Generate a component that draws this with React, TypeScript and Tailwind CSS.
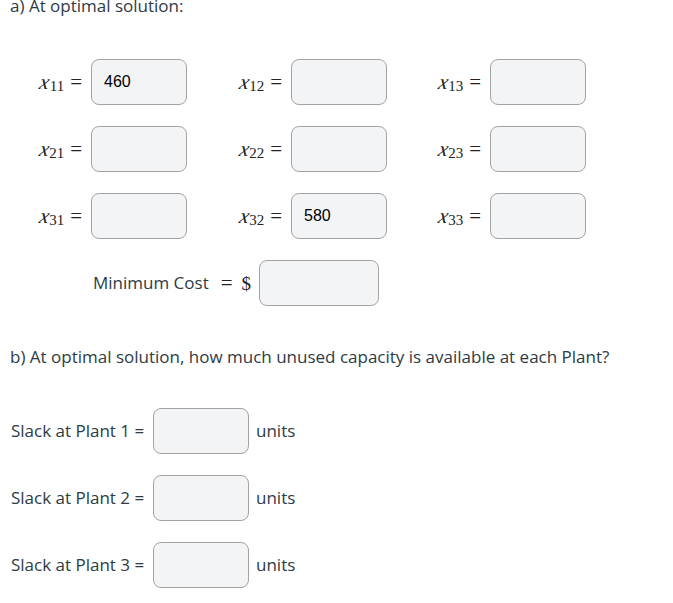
import React from "react";

const body = { fontFamily: '"Open Sans", "Noto Sans", sans-serif' };
const math = { fontFamily: '"Liberation Serif", "DejaVu Serif", serif' };

function Box({ value = "", w = "w-[96px]" }: { value?: string; w?: string }) {
  return (
    <div
      className={`${w} h-[46px] shrink-0 rounded-[8px] border border-[#a3a3a3] bg-[#f3f4f6] flex items-center pl-[12px] text-[16px] text-black`}
      style={{ fontFamily: '"Liberation Sans", Arial, sans-serif' }}
    >
      {value}
    </div>
  );
}

function Var({ i, j }: { i: number; j: number }) {
  return (
    <span className="flex items-center text-[#222]" style={math}>
      <span className="inline-block -skew-x-12 italic text-[21px] leading-none">x</span>
      <span className="text-[15px] leading-none relative top-[4px]">{`${i}${j}`}</span>
      <span className="text-[21px] leading-none ml-[6px]">=</span>
    </span>
  );
}

const vals: Record<string, string> = { "11": "460", "32": "580" };

export default function App() {
  return (
    <div className="w-[673px] h-[603px] bg-white overflow-hidden text-[17px] text-[#2d3b45]" style={body}>
      <div className="pl-[10px] -mt-[6px] leading-[24px]">a) At optimal solution:</div>

      <div className="mt-[41px] flex flex-col gap-[21px]">
        {[1, 2, 3].map((i) => (
          <div key={i} className="flex">
            {[1, 2, 3].map((j) => (
              <div
                key={j}
                className={`${j === 1 ? "w-[187px]" : j === 2 ? "w-[200px]" : "w-[199px]"} flex items-center justify-end gap-[9px]`}
              >
                <Var i={i} j={j} />
                <Box value={vals[`${i}${j}`] || ""} />
              </div>
            ))}
          </div>
        ))}
      </div>

      <div className="mt-[21px] flex items-center pl-[93px]">
        <span>Minimum Cost</span>
        <span className="ml-[12px] text-[21px] leading-none text-[#222]" style={math}>=</span>
        <span className="ml-[9px] text-[19px] leading-none text-[#222]" style={math}>$</span>
        <span className="ml-[8px]">
          <Box w="w-[120px]" />
        </span>
      </div>

      <div className="mt-[39px] pl-[10px] leading-[24px]">
        b) At optimal solution, how much unused capacity is available at each Plant?
      </div>

      <div className="mt-[39px] flex flex-col gap-[21px]">
        {[1, 2, 3].map((p) => (
          <div key={p} className="flex items-center pl-[11px]">
            <span className="w-[142px]">Slack at Plant {p} =</span>
            <Box />
            <span className="ml-[7px]">units</span>
          </div>
        ))}
      </div>
    </div>
  );
}
